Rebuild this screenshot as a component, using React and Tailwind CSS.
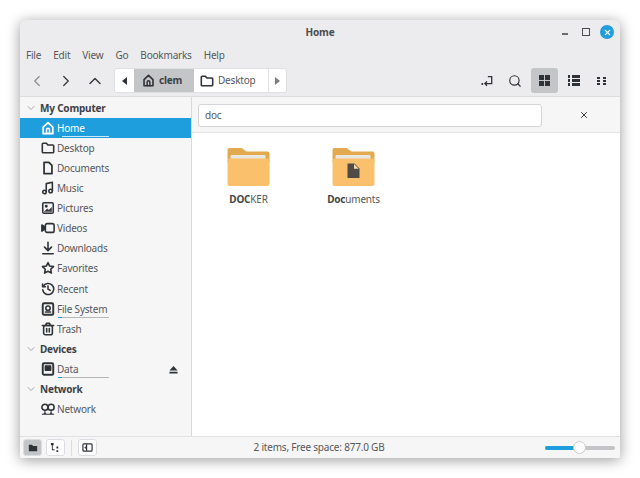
import { ChevronLeft, ChevronRight, ChevronUp, ChevronDown, Search, X } from "lucide-react";

const ic = "w-[14px] h-[14px] shrink-0";

function Svg({ children, className = ic }) {
  return (
    <svg viewBox="0 0 16 16" fill="none" stroke="currentColor" strokeWidth="1.800" strokeLinejoin="round" strokeLinecap="round" className={className}>
      {children}
    </svg>
  );
}

const HomeIcon = ({ className }) => (
  <Svg className={className}>
    <path d="M2.500 14.500V7L8 1.800 13.500 7v7.500z" strokeWidth="2" />
    <path d="M6.300 14.500V10a1.700 1.700 0 0 1 3.400 0v4.500" />
  </Svg>
);
const FolderIcon = ({ className }) => (
  <Svg className={className}>
    <path d="M1.500 12.500V3.500a1 1 0 0 1 1-1h3.700l1.600 2h5.700a1 1 0 0 1 1 1v7a1 1 0 0 1-1 1h-11a1 1 0 0 1-1-1z" />
  </Svg>
);
const DocIcon = () => (
  <Svg>
    <path d="M3.500 14.500v-13h5.500l3.500 3.500v9.500z" strokeWidth="2" />
  </Svg>
);
const MusicIcon = () => (
  <Svg>
    <path d="M6 12.500V3l7-1.500V11" />
    <circle cx="4" cy="12.500" r="2" />
    <circle cx="11" cy="11.500" r="2" />
  </Svg>
);
const PictureIcon = () => (
  <Svg>
    <rect x="2" y="2" width="12" height="12" rx="1.500" />
    <circle cx="6" cy="6" r="0.800" fill="currentColor" />
    <path d="M4 12l3-3 2 1.500 3-3v4.500z" fill="currentColor" strokeWidth="0.600" />
  </Svg>
);
const VideoIcon = () => (
  <Svg>
    <rect x="5" y="3" width="10" height="10" rx="2" />
    <path d="M1 4.500l3 2v3l-3 2z" fill="currentColor" />
  </Svg>
);
const DownloadIcon = () => (
  <Svg>
    <path d="M8 1.500v9M4 7l4 4 4-4M2 14.500h12" />
  </Svg>
);
const StarIcon = () => (
  <Svg>
    <path d="M8 1.800l1.900 4 4.400.600-3.200 3 .8 4.400L8 11.700l-3.900 2.100.8-4.400-3.200-3 4.400-.600z" />
  </Svg>
);
const RecentIcon = () => (
  <Svg>
    <path d="M2.600 5.200A6.300 6.300 0 1 1 2 9" />
    <path d="M1.800 2.200v3.300h3.300M8 4.500V8l2.500 1.500" />
  </Svg>
);
const DriveIcon = () => (
  <Svg>
    <rect x="2" y="1.500" width="12" height="13" rx="1.500" strokeWidth="2.200" />
    <circle cx="8" cy="7" r="2.500" />
    <path d="M5 11.500h6" />
  </Svg>
);
const TrashIcon = () => (
  <Svg>
    <path d="M1.500 4h13M5.500 4l.7-2.500h3.600L10.500 4" />
    <rect x="3" y="4" width="10" height="10.500" rx="2" />
    <path d="M6.500 7.500v4M9.500 7.500v4" />
  </Svg>
);
const DataIcon = () => (
  <Svg>
    <rect x="2" y="1.500" width="12" height="13" rx="1.500" strokeWidth="2.200" />
    <rect x="5" y="4.500" width="6" height="5" fill="currentColor" />
  </Svg>
);
const NetworkIcon = () => (
  <Svg>
    <circle cx="4.500" cy="6" r="3.500" />
    <circle cx="11.500" cy="6" r="3.500" />
    <path d="M4.500 9.500v3M11.500 9.500v3M1.500 14h13M3 14l1.500-2 1.500 2M10 14l1.500-2 1.500 2" strokeWidth="1.200" />
  </Svg>
);

const places = [
  { name: "Desktop", icon: <FolderIcon className={ic} /> },
  { name: "Documents", icon: <DocIcon /> },
  { name: "Music", icon: <MusicIcon /> },
  { name: "Pictures", icon: <PictureIcon /> },
  { name: "Videos", icon: <VideoIcon /> },
  { name: "Downloads", icon: <DownloadIcon /> },
  { name: "Favorites", icon: <StarIcon /> },
  { name: "Recent", icon: <RecentIcon />, nudge: true },
  { name: "File System", icon: <DriveIcon />, usage: 4 },
  { name: "Trash", icon: <TrashIcon /> },
];

function SectionTitle({ children }) {
  return (
    <div className="h-5 flex items-center pl-[5px] gap-[3px] font-bold text-[#3d4146]">
      <ChevronDown className="w-[12px] h-[12px] text-[#8b8d90]" strokeWidth={1.500} />
      <span>{children}</span>
    </div>
  );
}

function Row({ name, icon, usage, active, eject, nudge }) {
  return (
    <div className={`relative h-5 flex items-center pl-[21px] pr-[12px] gap-[2px] ${nudge ? "mt-[1px]" : ""} ${active ? "bg-[#1f9ede] text-white" : "text-[#55585c]"}`}>
      <span className={active ? "text-white" : "text-[#2f3236]"}>{icon}</span>
      <span>{name}</span>
      {usage !== undefined && (
        <div className={`absolute left-[38px] bottom-[1px] w-[51px] h-[1px] ${active ? "bg-[#cfe6f5]" : "bg-[#b5b7ba]"}`}>
          <div className="h-full w-[4px] bg-[#1f9ede]" />
        </div>
      )}
      {eject && (
        <svg viewBox="0 0 10 10" className="w-[9px] h-[9px] ml-auto mr-[1px] text-[#2f3236]" fill="currentColor">
          <path d="M5 1l4.500 5h-9zM.5 7.500h9V9.500h-9z" />
        </svg>
      )}
    </div>
  );
}

function BigFolder({ doc }) {
  return (
    <svg viewBox="0 0 43 39" className="w-[43px] h-[39px]">
      <path d="M.5 14V2a2 2 0 0 1 2-2h12l5 3.500h21a2 2 0 0 1 2 2V14z" fill="#e3a94f" />
      <rect x="3.500" y="7" width="35" height="6" rx="1" fill="#e8e6e1" />
      <path d="M.5 12.500a2 2 0 0 1 2-2h38a2 2 0 0 1 2 2V36a2 2 0 0 1-2 2h-38a2 2 0 0 1-2-2z" fill="#fac06c" />
      {doc && <path d="M15.500 15.500h7l5 5V30h-12z" fill="#4f4b46" />}
      {doc && <path d="M22 16v4.800h4.800z" fill="#f3d9ac" />}
    </svg>
  );
}

function FileItem({ bold, rest, doc }) {
  return (
    <div className="w-[105px] flex flex-col items-center gap-[5px] text-[#55585c]">
      <BigFolder doc={doc} />
      <div>
        <span className="font-bold text-[#44474b]">{bold}</span>
        {rest}
      </div>
    </div>
  );
}

function ViewButton({ active, children }) {
  return (
    <div className={`w-[27px] h-[25px] rounded-[3px] flex items-center justify-center text-[#2f3236] ${active ? "bg-[#c4c5c7] mr-[1px]" : ""}`}>
      {children}
    </div>
  );
}

function FootButton({ active, children }) {
  return (
    <div className={`w-[19px] h-[17px] rounded-[3px] border border-[#dcdde0] flex items-center justify-center text-[#2f3236] ${active ? "bg-[#c4c5c7]" : "bg-white"}`}>
      {children}
    </div>
  );
}

export default function App() {
  return (
    <div className="w-[640px] h-[478px] bg-white pt-[20px] px-[20px] overflow-hidden font-['Noto_Sans',sans-serif] text-[10px] tracking-[-0.2px]">
      <div className="w-[600px] h-[438px] flex flex-col bg-[#ececee] rounded-t-[6px] rounded-b-[2px] shadow-[0_2px_14px_rgba(0,0,0,0.4)] overflow-hidden">
        {/* titlebar */}
        <div className="relative h-[24px] shrink-0 flex items-center justify-center pt-[1px] font-bold text-[#4a4d51]">
          Home
          <div className="absolute right-[6px] top-[5px] flex items-center">
            <div className="w-[6px] h-[1.500px] mt-[4px] bg-[#6a6c70]" />
            <div className="w-[8px] h-[8px] ml-[14px] border-[1.500px] border-[#4a4d51]" />
            <div className="w-[14px] h-[14px] ml-[10px] rounded-full bg-[#1f9ede] flex items-center justify-center">
              <X className="w-[9px] h-[9px] text-white" strokeWidth={3} />
            </div>
          </div>
        </div>

        {/* menubar */}
        <div className="h-[21px] shrink-0 flex items-center gap-[12px] pl-[6px] pt-[1px] text-[#55585c]">
          <span>File</span>
          <span>Edit</span>
          <span>View</span>
          <span>Go</span>
          <span>Bookmarks</span>
          <span>Help</span>
        </div>

        {/* toolbar */}
        <div className="h-[32px] shrink-0 flex items-center border-b border-[#dcdde0]">
          <div className="w-[94px] flex items-center text-[#3a3d41]">
            <ChevronLeft className="w-[18px] h-[18px] ml-[8px] text-[#8b8d90]" strokeWidth={1.600} />
            <ChevronRight className="w-[18px] h-[18px] ml-[11px]" strokeWidth={1.800} />
            <ChevronUp className="w-[20px] h-[20px] ml-[10px]" strokeWidth={1.800} />
          </div>
          <div className="h-[25px] flex items-center bg-white rounded-[3px] border border-[#dfe0e2] text-[#55585c]">
            <div className="w-[19px] h-full flex items-center justify-center">
              <div className="w-0 h-0 border-y-[4.500px] border-y-transparent border-r-[5px] border-r-[#2f3236]" />
            </div>
            <div className="w-[60px] h-full bg-[#c4c5c7] flex items-center pl-[8px] gap-[4px] font-bold text-[#3d4146]">
              <HomeIcon className="w-[13px] h-[13px] text-[#2f3236]" />
              clem
            </div>
            <div className="w-[75px] h-full flex items-center pl-[6px] gap-[4px] border-r border-[#dfe0e2]">
              <FolderIcon className="w-[14px] h-[14px] text-[#2f3236]" />
              Desktop
            </div>
            <div className="w-[17px] h-full flex items-center justify-center">
              <div className="w-0 h-0 border-y-[4.500px] border-y-transparent border-l-[5px] border-l-[#7d7f83]" />
            </div>
          </div>
          <div className="ml-auto flex items-center pr-[5px] gap-[1px]">
            <svg viewBox="0 0 14 14" className="w-[12px] h-[12px] mr-[14px] text-[#2f3236]" fill="none" stroke="currentColor" strokeWidth="1.500">
              <path d="M8 2h4.500v8H5M7 7.500L4.500 10 7 12.500" />
              <circle cx="1.500" cy="10.500" r="1.200" fill="currentColor" stroke="none" />
            </svg>
            <Search className="w-[14px] h-[14px] mr-[8px] text-[#2f3236]" strokeWidth={2} />
            <ViewButton active>
              <div className="grid grid-cols-2 gap-[1.500px]">
                <div className="w-[5px] h-[5px] bg-[#2f3236]" />
                <div className="w-[5px] h-[5px] bg-[#2f3236]" />
                <div className="w-[5px] h-[5px] bg-[#2f3236]" />
                <div className="w-[5px] h-[5px] bg-[#2f3236]" />
              </div>
            </ViewButton>
            <ViewButton>
              <div className="grid grid-cols-[2.500px_8px] gap-x-[1.500px] gap-y-[1.500px]">
                <div className="h-[2.500px] bg-[#2f3236]" />
                <div className="h-[2.500px] bg-[#2f3236]" />
                <div className="h-[2.500px] bg-[#2f3236]" />
                <div className="h-[2.500px] bg-[#2f3236]" />
                <div className="h-[2.500px] bg-[#2f3236]" />
                <div className="h-[2.500px] bg-[#2f3236]" />
              </div>
            </ViewButton>
            <ViewButton>
              <div className="grid grid-cols-[3px_3px] gap-x-[3px] gap-y-[1px]">
                <div className="h-[2px] bg-[#2f3236]" />
                <div className="h-[2px] bg-[#2f3236]" />
                <div className="h-[2px] bg-[#2f3236]" />
                <div className="h-[2px] bg-[#2f3236]" />
                <div className="h-[2px] bg-[#2f3236]" />
                <div className="h-[2px] bg-[#2f3236]" />
              </div>
            </ViewButton>
          </div>
        </div>

        {/* main */}
        <div className="flex-1 flex min-h-0">
          <div className="w-[172px] shrink-0 pt-[1px] bg-[#f6f6f6] border-r border-[#d8d9db]">
            <SectionTitle>My Computer</SectionTitle>
            <Row name="Home" icon={<HomeIcon className={ic} />} usage={0} active />
            {places.map((p) => (
              <Row key={p.name} {...p} />
            ))}
            <SectionTitle>Devices</SectionTitle>
            <Row name="Data" icon={<DataIcon />} usage={4} eject />
            <SectionTitle>Network</SectionTitle>
            <Row name="Network" icon={<NetworkIcon />} />
          </div>

          <div className="flex-1 flex flex-col bg-white min-w-0">
            <div className="h-[36px] shrink-0 flex items-center pl-[6px] pt-[1px] bg-[#f6f6f6] border-b border-[#e2e3e5]">
              <div className="w-[344px] h-[23px] flex items-center pl-[6px] bg-white rounded-[3px] border border-[#d3d4d6] text-[#55585c]">
                doc
              </div>
              <X className="w-[10px] h-[10px] ml-[37px] text-[#3a3d41]" strokeWidth={2.400} />
            </div>
            <div className="flex-1 flex pt-[15px] pl-[4px]">
              <FileItem bold="DOC" rest="KER" />
              <FileItem bold="Doc" rest="uments" doc />
            </div>
          </div>
        </div>

        {/* statusbar */}
        <div className="relative h-[22px] shrink-0 flex items-center pl-[3px] bg-[#f6f6f6] border-t border-[#e0e1e3] text-[#55585c]">
          <FootButton active>
            <svg viewBox="0 0 12 12" className="w-[10px] h-[10px]" fill="currentColor">
              <path d="M1 2h4l1 1.500h5V10H1z" />
            </svg>
          </FootButton>
          <div className="w-[4px]" />
          <FootButton>
            <svg viewBox="0 0 12 12" className="w-[11px] h-[11px]" fill="currentColor">
              <path d="M1 1h3v2.500H3V8h2v1H2V3.500H1zM7 5h2v2H7zM7 9h2v2H7z" />
            </svg>
          </FootButton>
          <div className="w-[1px] h-[16px] mx-[6px] bg-[#dcdde0]" />
          <FootButton>
            <svg viewBox="0 0 12 12" className="w-[11px] h-[11px]" fill="none" stroke="currentColor" strokeWidth="1.300">
              <rect x="1" y="2" width="10" height="8" rx="1" />
              <path d="M5 2.500v7" />
              <path d="M4.200 4.500L2.500 6l1.700 1.500z" fill="currentColor" stroke="none" />
            </svg>
          </FootButton>
          <div className="flex-1 text-center pr-[4px]">2 items, Free space: 877.0 GB</div>
          <div className="relative w-[70px] h-[4px] mr-[5px] rounded-full bg-[#c4c5c9]">
            <div className="w-[30px] h-full rounded-full bg-[#1f9ede]" />
            <div className="absolute left-[28px] top-[-5px] w-[13px] h-[13px] rounded-full bg-white border border-[#c9cacc]" />
          </div>
        </div>
      </div>
    </div>
  );
}
